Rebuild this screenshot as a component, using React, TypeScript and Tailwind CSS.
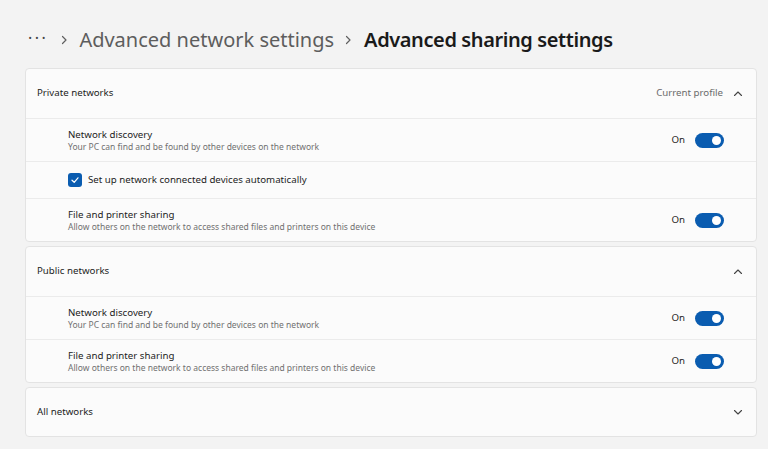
import React from "react";

const font = { fontFamily: '"Noto Sans", "Open Sans", sans-serif' };

function ChevronRight() {
  return (
    <svg width="8" height="10" viewBox="0 0 8 10" className="text-[#5f5f5f]">
      <path d="M2.5 1.5 L6 5 L2.5 8.5" fill="none" stroke="currentColor" strokeWidth="1.2" strokeLinecap="round" strokeLinejoin="round" />
    </svg>
  );
}

function ChevronUp() {
  return (
    <svg width="10" height="8" viewBox="0 0 10 8" className="text-[#444]">
      <path d="M1.5 5.5 L5 2 L8.5 5.5" fill="none" stroke="currentColor" strokeWidth="1.1" strokeLinecap="round" strokeLinejoin="round" />
    </svg>
  );
}

function ChevronDown() {
  return (
    <svg width="10" height="8" viewBox="0 0 10 8" className="text-[#444]">
      <path d="M1.5 2.5 L5 6 L8.5 2.5" fill="none" stroke="currentColor" strokeWidth="1.1" strokeLinecap="round" strokeLinejoin="round" />
    </svg>
  );
}

function Toggle() {
  return (
    <div className="flex items-center gap-[10px]">
      <span className="text-[9.7px] text-[#1f1f1f]">On</span>
      <div className="w-[29px] h-[15px] rounded-full bg-[#0a5cb0] flex items-center justify-end pr-[3px]">
        <div className="w-[9px] h-[9px] rounded-full bg-white" />
      </div>
    </div>
  );
}

function SettingRow({ title, desc }: { title: string; desc: string }) {
  return (
    <div className="h-[43px] border-t border-[#ebebeb] flex items-center pl-[42px] pr-[32px]">
      <div className="flex-1 flex flex-col">
        <span className="text-[9.7px] leading-[13px] text-[#1b1b1b]">{title}</span>
        <span className="text-[8.5px] leading-[12px] text-[#707070]">{desc}</span>
      </div>
      <Toggle />
    </div>
  );
}

export default function App() {
  return (
    <div style={font} className="w-[768px] h-[449px] bg-[#f3f3f3] overflow-hidden">
      <div className="pl-[25px] pr-[11px]">
        <div className="h-[68px] flex items-center pl-[3px] pt-[12px]">
          <span className="text-[16px] text-[#444] tracking-[2.5px] leading-none -mt-[4px]">···</span>
          <span className="ml-[12px] mr-[11px] flex items-center"><ChevronRight /></span>
          <span className="text-[20px] text-[#5d5d5d] leading-none">Advanced network settings</span>
          <span className="ml-[10px] mr-[12px] flex items-center"><ChevronRight /></span>
          <span className="text-[20px] text-[#1a1a1a] font-semibold tracking-[-0.4px] leading-none">Advanced sharing settings</span>
        </div>

        <div className="flex flex-col gap-[4px]">
          <div className="bg-[#fbfbfb] border border-[#e3e3e3] rounded-[4px]">
            <div className="h-[49px] flex items-center pl-[11px] pr-[13px]">
              <span className="flex-1 text-[9.7px] text-[#1b1b1b]">Private networks</span>
              <span className="text-[9.7px] text-[#6a6a6a] mr-[10px]">Current profile</span>
              <ChevronUp />
            </div>
            <SettingRow title="Network discovery" desc="Your PC can find and be found by other devices on the network" />
            <div className="h-[37px] border-t border-[#ebebeb] flex items-center pl-[42px]">
              <div className="w-[14px] h-[14px] rounded-[3px] bg-[#0a5cb0] flex items-center justify-center">
                <svg width="10" height="10" viewBox="0 0 10 10">
                  <path d="M2 5.2 L4.2 7.3 L8 2.8" fill="none" stroke="white" strokeWidth="1.2" strokeLinecap="round" strokeLinejoin="round" />
                </svg>
              </div>
              <span className="ml-[6px] text-[9.7px] text-[#1b1b1b]">Set up network connected devices automatically</span>
            </div>
            <SettingRow title="File and printer sharing" desc="Allow others on the network to access shared files and printers on this device" />
          </div>

          <div className="bg-[#fbfbfb] border border-[#e3e3e3] rounded-[4px]">
            <div className="h-[49px] flex items-center pl-[11px] pr-[13px]">
              <span className="flex-1 text-[9.7px] text-[#1b1b1b]">Public networks</span>
              <ChevronUp />
            </div>
            <SettingRow title="Network discovery" desc="Your PC can find and be found by other devices on the network" />
            <SettingRow title="File and printer sharing" desc="Allow others on the network to access shared files and printers on this device" />
          </div>

          <div className="bg-[#fbfbfb] border border-[#e3e3e3] rounded-[4px]">
            <div className="h-[48px] flex items-center pl-[11px] pr-[13px]">
              <span className="flex-1 text-[9.7px] text-[#1b1b1b]">All networks</span>
              <ChevronDown />
            </div>
          </div>
        </div>
      </div>
    </div>
  );
}
